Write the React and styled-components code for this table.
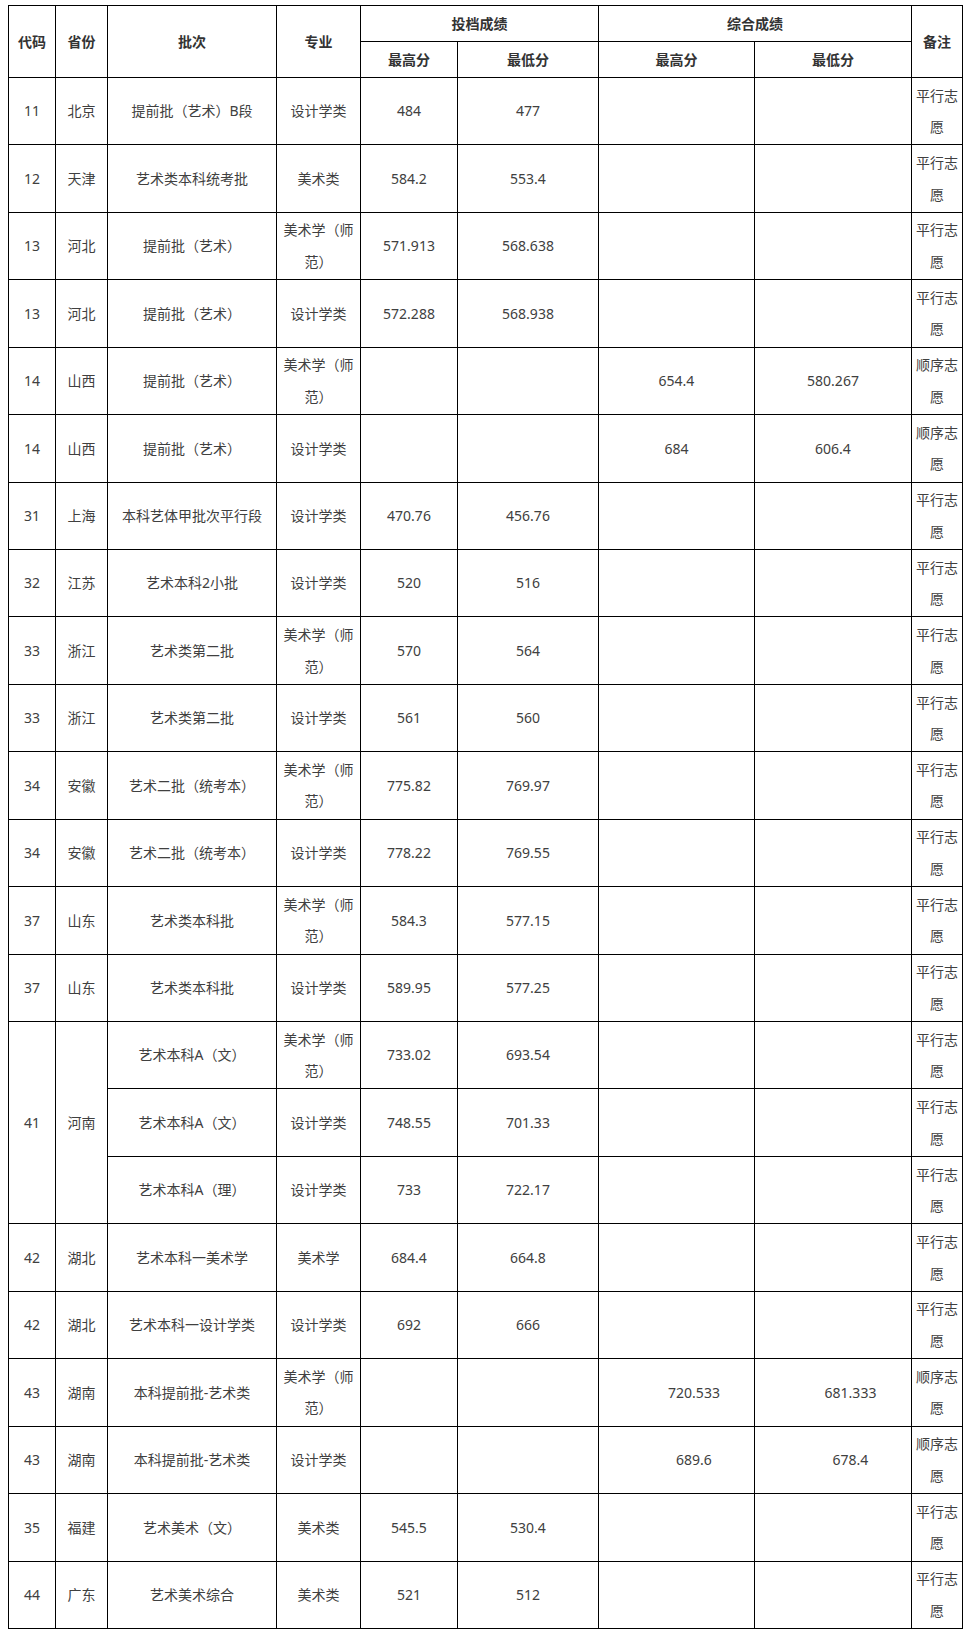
import React from "react";
import styled, { createGlobalStyle } from "styled-components";

const Global = createGlobalStyle`
  html, body { margin: 0; padding: 0; background: #fff; }
  body { font-family: "Noto Sans", "Noto Sans CJK SC", sans-serif; }
`;

const Page = styled.div`
  padding: 5px 0 16px 8px;
`;

const Table = styled.table`
  width: 954px;
  table-layout: fixed;
  border-collapse: collapse;
  font-size: 14px;
  color: #404040;
`;

const Cell = styled.td`
  border: 1px solid #000;
  padding: 1.72px 4px;
  line-height: 31.5px;
  text-align: center;
  vertical-align: middle;
  padding-left: ${(p) => (p.$shift ? "39px" : "4px")};
`;

const Head = styled.th`
  border: 1px solid #000;
  padding: 1.72px 4px;
  line-height: 31.5px;
  text-align: center;
  vertical-align: middle;
  font-weight: bold;
  color: #333;
`;

const widths = [47, 52, 169, 84, 97, 141, 156, 157, 51];

const rows = [
  ["11", "北京", "提前批（艺术）B段", "设计学类", "484", "477", "", "", "平行志愿"],
  ["12", "天津", "艺术类本科统考批", "美术类", "584.2", "553.4", "", "", "平行志愿"],
  ["13", "河北", "提前批（艺术）", "美术学（师范）", "571.913", "568.638", "", "", "平行志愿"],
  ["13", "河北", "提前批（艺术）", "设计学类", "572.288", "568.938", "", "", "平行志愿"],
  ["14", "山西", "提前批（艺术）", "美术学（师范）", "", "", "654.4", "580.267", "顺序志愿"],
  ["14", "山西", "提前批（艺术）", "设计学类", "", "", "684", "606.4", "顺序志愿"],
  ["31", "上海", "本科艺体甲批次平行段", "设计学类", "470.76", "456.76", "", "", "平行志愿"],
  ["32", "江苏", "艺术本科2小批", "设计学类", "520", "516", "", "", "平行志愿"],
  ["33", "浙江", "艺术类第二批", "美术学（师范）", "570", "564", "", "", "平行志愿"],
  ["33", "浙江", "艺术类第二批", "设计学类", "561", "560", "", "", "平行志愿"],
  ["34", "安徽", "艺术二批（统考本）", "美术学（师范）", "775.82", "769.97", "", "", "平行志愿"],
  ["34", "安徽", "艺术二批（统考本）", "设计学类", "778.22", "769.55", "", "", "平行志愿"],
  ["37", "山东", "艺术类本科批", "美术学（师范）", "584.3", "577.15", "", "", "平行志愿"],
  ["37", "山东", "艺术类本科批", "设计学类", "589.95", "577.25", "", "", "平行志愿"],
  { code: "41", prov: "河南", span: 3, rest: ["艺术本科A（文）", "美术学（师范）", "733.02", "693.54", "", "", "平行志愿"] },
  { cont: true, rest: ["艺术本科A（文）", "设计学类", "748.55", "701.33", "", "", "平行志愿"] },
  { cont: true, rest: ["艺术本科A（理）", "设计学类", "733", "722.17", "", "", "平行志愿"] },
  ["42", "湖北", "艺术本科一美术学", "美术学", "684.4", "664.8", "", "", "平行志愿"],
  ["42", "湖北", "艺术本科一设计学类", "设计学类", "692", "666", "", "", "平行志愿"],
  { shift: true, cells: ["43", "湖南", "本科提前批-艺术类", "美术学（师范）", "", "", "720.533", "681.333", "顺序志愿"] },
  { shift: true, cells: ["43", "湖南", "本科提前批-艺术类", "设计学类", "", "", "689.6", "678.4", "顺序志愿"] },
  ["35", "福建", "艺术美术（文）", "美术类", "545.5", "530.4", "", "", "平行志愿"],
  ["44", "广东", "艺术美术综合", "美术类", "521", "512", "", "", "平行志愿"],
];

function renderRow(r, i) {
  if (Array.isArray(r)) {
    return (
      <tr key={i}>
        {r.map((c, j) => (
          <Cell key={j}>{c}</Cell>
        ))}
      </tr>
    );
  }
  if (r.cells) {
    return (
      <tr key={i}>
        {r.cells.map((c, j) => (
          <Cell key={j} $shift={r.shift && (j === 6 || j === 7)}>
            {c}
          </Cell>
        ))}
      </tr>
    );
  }
  if (r.span) {
    return (
      <tr key={i}>
        <Cell rowSpan={r.span}>{r.code}</Cell>
        <Cell rowSpan={r.span}>{r.prov}</Cell>
        {r.rest.map((c, j) => (
          <Cell key={j}>{c}</Cell>
        ))}
      </tr>
    );
  }
  return (
    <tr key={i}>
      {r.rest.map((c, j) => (
        <Cell key={j}>{c}</Cell>
      ))}
    </tr>
  );
}

export default function App() {
  return (
    <Page>
      <Global />
      <Table>
        <colgroup>
          {widths.map((w, i) => (
            <col key={i} style={{ width: w }} />
          ))}
        </colgroup>
        <thead>
          <tr>
            <Head rowSpan={2}>代码</Head>
            <Head rowSpan={2}>省份</Head>
            <Head rowSpan={2}>批次</Head>
            <Head rowSpan={2}>专业</Head>
            <Head colSpan={2}>投档成绩</Head>
            <Head colSpan={2}>综合成绩</Head>
            <Head rowSpan={2}>备注</Head>
          </tr>
          <tr>
            <Head>最高分</Head>
            <Head>最低分</Head>
            <Head>最高分</Head>
            <Head>最低分</Head>
          </tr>
        </thead>
        <tbody>{rows.map(renderRow)}</tbody>
      </Table>
    </Page>
  );
}
